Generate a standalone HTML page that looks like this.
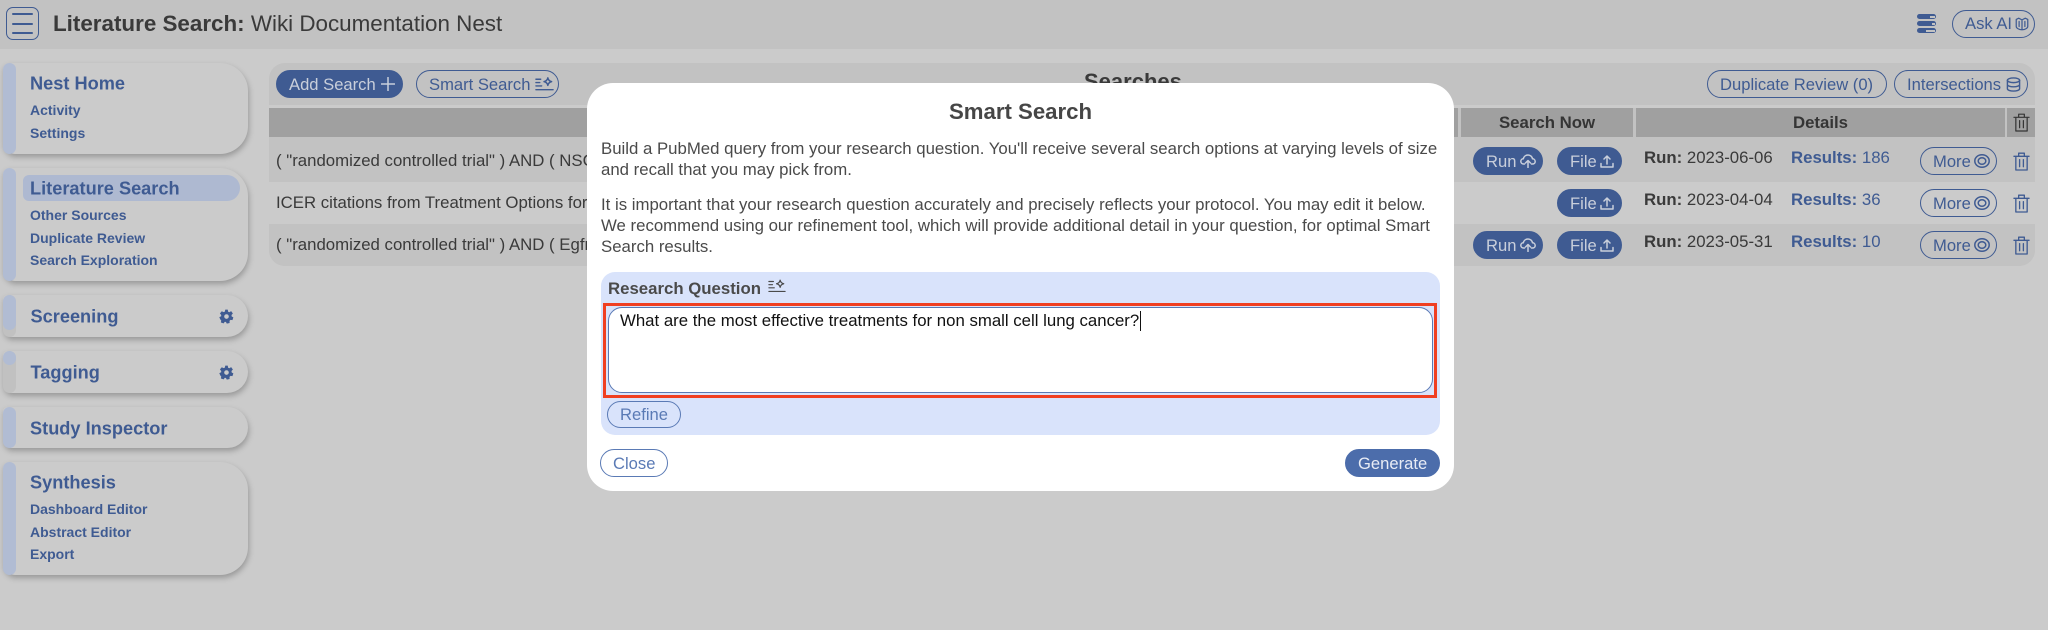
<!DOCTYPE html>
<html><head><meta charset="utf-8"><title>Smart Search</title>
<style>
*{box-sizing:border-box}
html,body{margin:0;padding:0}
body{width:2048px;height:630px;overflow:hidden;background:#cbcbcb;font-family:"Liberation Sans",sans-serif}
#w{position:absolute;left:0;top:0;width:2048px;height:630px;overflow:hidden;background:#cbcbcb;filter:blur(.35px)}
.a{position:absolute;white-space:nowrap}
.card{position:absolute;left:3px;width:245px;background:#cbcbcb;border-radius:6px 28px 28px 12px;box-shadow:1px 3px 6px rgba(0,0,0,.25)}
.bar{position:absolute;left:3px;width:13px;background:#b1bcd3;border-radius:7px}
.s{position:absolute;left:30px;color:#3f5b92;font-weight:700;white-space:nowrap;transform:translateY(-50%)}
.h{font-size:18.2px;margin-top:1px}.i{font-size:14px}
.btn{position:absolute;height:28px;border-radius:14px;font-size:16.6px;line-height:27px;white-space:nowrap;border:1.7px solid #3f5b92;color:#3f5b92;padding-left:12px}
.f{background:#3f5b92;color:#c9cfdb}
.ic{position:absolute;fill:none;stroke:currentColor;stroke-width:1.5;stroke-linecap:round;stroke-linejoin:round}
.th{position:absolute;top:108px;height:29px;background:#a0a0a0;color:#353535;font-weight:700;font-size:16.8px;line-height:29px;text-align:center}
.row{position:absolute;left:269px;width:1766px;height:42px}
.t{position:absolute;left:7px;top:0;line-height:42px;font-size:16.8px;color:#3a3a3a;white-space:nowrap}
.d{position:absolute;font-size:16.8px;color:#3a3a3a;white-space:nowrap;transform:translateY(-50%)}
.r{color:#3f5b92}
.p{position:absolute;left:601px;font-size:16.8px;line-height:21px;color:#4a4a4a;white-space:nowrap}
</style></head>
<body>
<div id="w">
<svg width="0" height="0" style="position:absolute">
<symbol id="trash" viewBox="0 0 18 20"><path d="M1 4.500H17M6 4.500V1.200H12V4.500M3 4.500V19H15V4.500M7 8V15.500M11 8V15.500"/></symbol>
<symbol id="spark" viewBox="0 0 20 14"><path d="M1 2H6M1 5.500H5M1 9H7M1 13H19"/><path d="M13.500 0.500C14 3 15 4 17.500 4.500C15 5 14 6 13.500 8.500C13 6 12 5 9.500 4.500C12 4 13 3 13.500 0.500Z"/></symbol>
<symbol id="eye" viewBox="0 0 16 14"><ellipse cx="8" cy="7" rx="7.200" ry="6.200"/><ellipse cx="8" cy="7" rx="3.800" ry="3.300"/></symbol>
<symbol id="cloud" viewBox="0 0 16 14"><path d="M4.500 10H3.500C2 10 .8 8.800 .8 7.300C.8 5.800 2 4.800 3.300 4.800C3.800 2.500 5.700 1 8 1C10.300 1 12.200 2.700 12.500 4.800C14 4.900 15.200 6 15.200 7.500C15.200 8.900 14 10 12.500 10H11.500"/><path d="M8 13.500V6.500M5.500 9L8 6.500L10.500 9"/></symbol>
<symbol id="up" viewBox="0 0 14 13"><path d="M7 9V1M4 4L7 1L10 4M1 8.500V12H13V8.500"/></symbol>
<symbol id="gear" viewBox="0 0 24 24"><path style="stroke:none;fill:currentColor" fill-rule="evenodd" d="M10 1H14L14.600 4.300L16.600 5.200L19.400 3.300L22.200 7.100L20 9.500L20.300 11.900L23 13.400L21.500 17.800L18.400 17.300L16.800 19L17 22.300L12.500 23.300L11 20.500H9L7.500 23L3 21.500L3.600 18.300L2 16.500L0.500 13L3.500 11.500L3.500 9.500L1.500 7L4.500 3.500L7.300 5L9.400 4.200ZM12 8.300A3.700 3.700 0 1 0 12 15.700A3.700 3.700 0 1 0 12 8.300Z"/></symbol>
</svg>

<!-- header -->
<div class="a" style="left:0;top:0;width:2048px;height:49px;background:#c2c2c2"></div>
<div class="a" style="left:6px;top:7px;width:33px;height:33px;border:1.7px solid #3f5b92;border-radius:7px"></div>
<div class="a" style="left:12px;top:12.500px;width:21px;height:2.800px;background:#3f5b92;border-radius:2px"></div>
<div class="a" style="left:12px;top:22.500px;width:21px;height:2.800px;background:#3f5b92;border-radius:2px"></div>
<div class="a" style="left:12px;top:31.500px;width:21px;height:2.800px;background:#3f5b92;border-radius:2px"></div>
<div class="a" style="left:53px;top:10px;font-size:22.4px;line-height:28px;color:#3a3a3a"><b>Literature Search:</b> Wiki Documentation Nest</div>
<div class="a" style="left:1917px;top:14px;width:19px;height:5px;background:#3f5b92;border-radius:3px"><i class="a" style="right:1px;top:1.500px;width:5px;height:2px;background:#c2c2c2"></i></div>
<div class="a" style="left:1917px;top:21px;width:19px;height:5px;background:#3f5b92;border-radius:3px"><i class="a" style="right:1px;top:1.500px;width:3px;height:2px;background:#c2c2c2"></i></div>
<div class="a" style="left:1917px;top:28px;width:19px;height:5px;background:#3f5b92;border-radius:3px"><i class="a" style="right:1px;top:1.500px;width:9px;height:2px;background:#c2c2c2"></i></div>
<div class="btn" style="left:1952px;top:10px;width:83px;padding-left:12px;line-height:26px">Ask AI</div>
<svg class="ic" style="left:2015px;top:17px;color:#3f5b92" width="14" height="14" viewBox="0 0 17 16"><path d="M1.500 2.500L4.500 1L8.500 3L12.500 1L15.500 2.500V11C15.500 13 12 15 8.500 15C5 15 1.500 13 1.500 11ZM8.500 3V15M5 5V11M12 5V11"/></svg>

<!-- sidebar -->
<div class="card" style="top:63px;height:91px"></div><div class="bar" style="top:63px;height:91px"></div>
<div class="card" style="top:168px;height:113px"></div><div class="bar" style="top:168px;height:113px"></div>
<div class="a" style="left:23px;top:175px;width:217px;height:26px;background:#aeb9d1;border-radius:6px 13px 13px 6px"></div>
<div class="card" style="top:295px;height:42px"></div>
<div class="a" style="left:3px;top:295px;width:13px;height:42px;background:#c1c1c1;border-radius:7px"></div>
<div class="bar" style="top:295px;height:35px"></div>
<div class="card" style="top:351px;height:42px"></div>
<div class="a" style="left:3px;top:351px;width:13px;height:42px;background:#c1c1c1;border-radius:7px"></div>
<div class="bar" style="top:351px;height:14px"></div>
<div class="card" style="top:407px;height:41px"></div><div class="bar" style="top:407px;height:41px"></div>
<div class="card" style="top:462px;height:113px"></div><div class="bar" style="top:462px;height:113px"></div>

<div class="s h" style="top:83px">Nest Home</div>
<div class="s i" style="top:110px">Activity</div>
<div class="s i" style="top:133px">Settings</div>
<div class="s h" style="top:188px">Literature Search</div>
<div class="s i" style="top:215px">Other Sources</div>
<div class="s i" style="top:238px">Duplicate Review</div>
<div class="s i" style="top:260px">Search Exploration</div>
<div class="s h" style="top:316px;left:30.500px">Screening</div>
<svg class="ic" style="left:219px;top:309px;color:#3f5b92" width="15" height="15"><use href="#gear"/></svg>
<div class="s h" style="top:372px;left:30.500px">Tagging</div>
<svg class="ic" style="left:219px;top:365px;color:#3f5b92" width="15" height="15"><use href="#gear"/></svg>
<div class="s h" style="top:428px">Study Inspector</div>
<div class="s h" style="top:482px">Synthesis</div>
<div class="s i" style="top:509px">Dashboard Editor</div>
<div class="s i" style="top:532px">Abstract Editor</div>
<div class="s i" style="top:554px">Export</div>

<!-- main panel -->
<div class="a" style="left:269px;top:63px;width:1766px;height:203px;background:#c2c2c2;border-radius:16px"></div>
<div class="a" style="left:269px;top:105px;width:1766px;height:3px;background:#cbcbcb"></div>
<div class="btn f" style="left:276px;top:70px;width:127px">Add Search</div>
<svg class="ic" style="left:381px;top:77px;color:#c9cfdb" width="14" height="14" viewBox="0 0 14 14"><path d="M7 .5V13.500M.5 7H13.500"/></svg>
<div class="btn" style="left:416px;top:70px;width:143px">Smart Search</div>
<svg class="ic" style="left:535px;top:77px;color:#3f5b92" width="19" height="14"><use href="#spark"/></svg>
<div class="a" style="left:1084px;top:69px;font-size:22px;font-weight:700;color:#3a3a3a">Searches</div>
<div class="btn" style="left:1707px;top:70px;width:180px">Duplicate Review (0)</div>
<div class="btn" style="left:1894px;top:70px;width:134px">Intersections</div>
<svg class="ic" style="left:2006px;top:77px;color:#3f5b92" width="15" height="15" viewBox="0 0 16 16"><ellipse cx="8" cy="3.500" rx="6.500" ry="2.500"/><path d="M1.500 3.500V12.500C1.500 14 4.500 15 8 15C11.500 15 14.500 14 14.500 12.500V3.500M1.500 8C1.500 9.500 4.500 10.500 8 10.500C11.500 10.500 14.500 9.500 14.500 8"/></svg>

<div class="th" style="left:269px;width:1189px"></div>
<div class="th" style="left:1461px;width:172px">Search Now</div>
<div class="th" style="left:1636px;width:369px">Details</div>
<div class="th" style="left:2007px;width:28px"></div>
<svg class="ic" style="left:2013px;top:113px;color:#353535;stroke-width:1.3" width="17" height="19"><use href="#trash"/></svg>

<div class="row" style="top:140px;background:#c2c2c2"><div class="t">( "randomized controlled trial" ) AND ( NSCLC</div></div>
<div class="row" style="top:182px;background:#cbcbcb"><div class="t">ICER citations from Treatment Options for</div></div>
<div class="row" style="top:224px;background:#c2c2c2;border-radius:0 0 16px 16px"><div class="t">( "randomized controlled trial" ) AND ( Egfr</div></div>

<div class="btn f" style="left:1473px;top:147px;width:70px">Run</div>
<svg class="ic" style="left:1520px;top:154px;color:#c9cfdb" width="16" height="14"><use href="#cloud"/></svg>
<div class="btn f" style="left:1557px;top:147px;width:65px">File</div>
<svg class="ic" style="left:1600px;top:155px;color:#c9cfdb" width="14" height="13"><use href="#up"/></svg>
<div class="btn f" style="left:1557px;top:189px;width:65px">File</div>
<svg class="ic" style="left:1600px;top:197px;color:#c9cfdb" width="14" height="13"><use href="#up"/></svg>
<div class="btn f" style="left:1473px;top:231px;width:70px">Run</div>
<svg class="ic" style="left:1520px;top:238px;color:#c9cfdb" width="16" height="14"><use href="#cloud"/></svg>
<div class="btn f" style="left:1557px;top:231px;width:65px">File</div>
<svg class="ic" style="left:1600px;top:239px;color:#c9cfdb" width="14" height="13"><use href="#up"/></svg>

<div class="d" style="left:1644px;top:158px"><b>Run:</b> 2023-06-06</div>
<div class="d r" style="left:1791px;top:158px"><b>Results:</b> 186</div>
<div class="d" style="left:1644px;top:200px"><b>Run:</b> 2023-04-04</div>
<div class="d r" style="left:1791px;top:200px"><b>Results:</b> 36</div>
<div class="d" style="left:1644px;top:242px"><b>Run:</b> 2023-05-31</div>
<div class="d r" style="left:1791px;top:242px"><b>Results:</b> 10</div>

<div class="btn" style="left:1920px;top:147px;width:77px">More</div>
<svg class="ic" style="left:1974px;top:154px;color:#3f5b92" width="16" height="14"><use href="#eye"/></svg>
<div class="btn" style="left:1920px;top:189px;width:77px">More</div>
<svg class="ic" style="left:1974px;top:196px;color:#3f5b92" width="16" height="14"><use href="#eye"/></svg>
<div class="btn" style="left:1920px;top:231px;width:77px">More</div>
<svg class="ic" style="left:1974px;top:238px;color:#3f5b92" width="16" height="14"><use href="#eye"/></svg>
<svg class="ic" style="left:2013px;top:152px;color:#3f5b92;stroke-width:1.4" width="17" height="19"><use href="#trash"/></svg>
<svg class="ic" style="left:2013px;top:194px;color:#3f5b92;stroke-width:1.4" width="17" height="19"><use href="#trash"/></svg>
<svg class="ic" style="left:2013px;top:236px;color:#3f5b92;stroke-width:1.4" width="17" height="19"><use href="#trash"/></svg>

<!-- modal -->
<div class="a" style="left:587px;top:83px;width:867px;height:408px;background:#fff;border-radius:26px"></div>
<div class="a" style="left:587px;width:867px;top:99px;text-align:center;font-size:22.2px;line-height:26px;font-weight:700;color:#464646">Smart Search</div>
<div class="p" style="top:138px">Build a PubMed query from your research question. You'll receive several search options at varying levels of size<br>and recall that you may pick from.</div>
<div class="p" style="top:194px">It is important that your research question accurately and precisely reflects your protocol. You may edit it below.<br>We recommend using our refinement tool, which will provide additional detail in your question, for optimal Smart<br>Search results.</div>
<div class="a" style="left:601px;top:272px;width:839px;height:163px;background:#d9e3fb;border-radius:14px"></div>
<div class="a" style="left:608px;top:279px;font-size:16.8px;line-height:20px;font-weight:700;color:#4a4a4a">Research Question</div>
<svg class="ic" style="left:768px;top:279px;color:#4a4a4a;stroke-width:1.3" width="18" height="14"><use href="#spark"/></svg>
<div class="a" style="left:603px;top:303px;width:834px;height:95px;border:3.4px solid #f03f22"></div>
<div class="a" style="left:608px;top:307px;width:825px;height:86px;background:#fff;border:1.7px solid #5a7ab5;border-radius:14px"></div>
<div class="a" style="left:620px;top:311px;font-size:16.8px;line-height:20px;color:#111">What are the most effective treatments for non small cell lung cancer?</div>
<div class="a" style="left:1140px;top:311px;width:1.200px;height:20px;background:#111"></div>
<div class="btn" style="left:607px;top:401px;height:27px;width:74px;border-color:#5a7ab5;color:#5a7ab5;line-height:26px">Refine</div>
<div class="btn" style="left:600px;top:449px;width:68px;border-color:#5a7ab5;color:#5a7ab5">Close</div>
<div class="btn" style="left:1345px;top:449px;width:95px;background:#4c6dab;border-color:#4c6dab;color:#e8ecf5">Generate</div>
</div>
</body></html>
